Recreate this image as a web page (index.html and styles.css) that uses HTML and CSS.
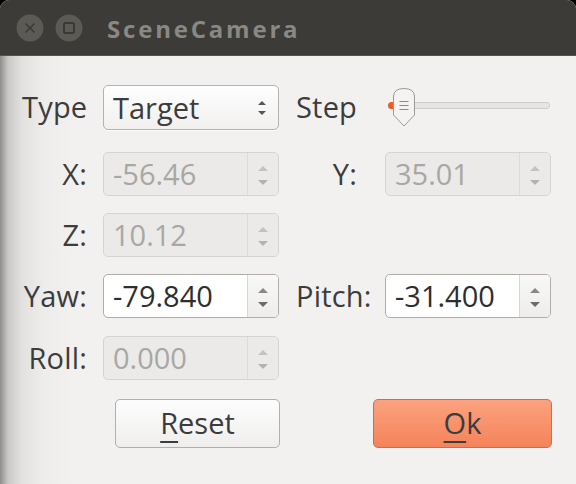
FILE: index.html
```html
<!DOCTYPE html>
<html>
<head>
<meta charset="utf-8">
<link rel="stylesheet" href="styles.css">
</head>
<body>
<div class="window">
  <div class="titlebar">
    <div class="wbtns">
      <span class="wbtn"><svg width="28" height="28" viewBox="0 0 28 28"><circle cx="14" cy="14" r="13.5" fill="#5b5a55"/><path d="M10 10 L18 18 M18 10 L10 18" stroke="#3a3935" stroke-width="1.6" stroke-linecap="round"/></svg></span>
      <span class="wbtn"><svg width="28" height="28" viewBox="0 0 28 28"><circle cx="14" cy="14" r="13.5" fill="#5b5a55"/><rect x="9" y="9" width="10" height="10" rx="1.5" fill="none" stroke="#3a3935" stroke-width="2"/></svg></span>
    </div>
    <div class="title">SceneCamera</div>
  </div>
  <div class="content">
    <div class="form">
      <div class="lbl">Type</div>
      <div class="combo"><span>Target</span>
        <svg class="carr" width="12" height="20" viewBox="0 0 12 20"><path d="M2 7 L6 3 L10 7 Z M2 13 L10 13 L6 17 Z" fill="#555"/></svg>
      </div>
      <div class="lbl2">Step</div>
      <div class="slider">
        <div class="track"><div class="fill"></div></div>
        <svg class="handle" width="28" height="42" viewBox="0 0 28 42"><path d="M3.5 10 Q3.5 1.5 14 1.5 Q24.5 1.5 24.5 10 L24.5 28 L14 39 L3.5 28 Z" fill="#f4f3f1" stroke="#9d9a95" stroke-width="1"/><path d="M9.5 14.5 H18.5 M9.5 18.5 H18.5 M9.5 22.5 H18.5" stroke="#8e8b86" stroke-width="1"/></svg>
      </div>

      <div class="lbl">X:</div>
      <div class="spin dis"><span class="val">-56.46</span><span class="arr"><i class="up"></i><i class="dn"></i></span></div>
      <div class="lbl2 right">Y:</div>
      <div class="spin dis"><span class="val">35.01</span><span class="arr"><i class="up"></i><i class="dn"></i></span></div>

      <div class="lbl">Z:</div>
      <div class="spin dis"><span class="val">10.12</span><span class="arr"><i class="up"></i><i class="dn"></i></span></div>
      <div></div><div></div>

      <div class="lbl">Yaw:</div>
      <div class="spin"><span class="val">-79.840</span><span class="arr"><i class="up"></i><i class="dn"></i></span></div>
      <div class="lbl2">Pitch:</div>
      <div class="spin"><span class="val">-31.400</span><span class="arr"><i class="up"></i><i class="dn"></i></span></div>

      <div class="lbl">Roll:</div>
      <div class="spin dis"><span class="val">0.000</span><span class="arr"><i class="up"></i><i class="dn"></i></span></div>
      <div></div><div></div>
    </div>
    <div class="buttons">
      <button class="btn reset"><u>R</u>eset</button>
      <button class="btn ok"><u>O</u>k</button>
    </div>
  </div>
</div>
</body>
</html>
```

FILE: styles.css
```css
html, body {
  margin: 0;
  padding: 0;
  background: #000;
}
body {
  width: 576px;
  height: 484px;
  overflow: hidden;
  font-family: "Open Sans", "DejaVu Sans", sans-serif;
  color: #3c3c3c;
}
.window {
  width: 576px;
  height: 484px;
  border-radius: 9px 9px 0 0;
  overflow: hidden;
  background: #f2f1f0;
}
.titlebar {
  height: 55px;
  background: #3c3b37;
  border-bottom: 1px solid #55544f;
  display: flex;
  align-items: center;
}
.wbtns {
  display: flex;
  gap: 11px;
  margin-left: 16px;
  margin-top: 1px;
}
.wbtn { display: block; width: 28px; height: 28px; }
.wbtn svg { display: block; }
.title {
  margin-left: 24px;
  font-family: "Open Sans", sans-serif;
  font-weight: 700;
  font-size: 24px;
  color: #8a8882;
  letter-spacing: 2.8px;
  margin-top: 1px;
}
.content {
  height: 428px;
  padding: 29px 0 0 22px;
  box-sizing: border-box;
  background:
    linear-gradient(to right, #8e8d8b 0px, #c9c8c6 8px, #e3e2e0 22px, #eeedec 45px, #f2f1f0 80px);
}
.form {
  display: grid;
  grid-template-columns: 81px 193px 89px 166px;
  grid-template-rows: 50px 44px 44px 45px 44px;
  row-gap: 17px;
  align-items: start;
}
.lbl {
  font-size: 29px;
  text-align: right;
  padding-right: 16px;
  height: 44px;
  line-height: 44px;
  letter-spacing: 0.2px;
}
.lbl2 {
  font-size: 29px;
  height: 44px;
  line-height: 44px;
  letter-spacing: 0.2px;
  white-space: nowrap;
}
.lbl2.right { text-align: right; padding-right: 28px; }
.combo {
  width: 176px;
  height: 45px;
  box-sizing: border-box;
  border: 1px solid #b5b2ad;
  border-radius: 5px;
  background: linear-gradient(#fefefe, #f1f0ef);
  display: flex;
  align-items: center;
  justify-content: space-between;
  padding: 0 10px 0 9px;
  font-size: 29px;
  box-shadow: 0 1px 0 rgba(255,255,255,0.7);
}
.combo span { margin-top: -1px; }
.slider {
  position: relative;
  height: 44px;
  width: 166px;
}
.track {
  position: absolute;
  left: 6px;
  right: 1px;
  top: 17px;
  height: 5px;
  border-radius: 3px;
  background: #e6e5e3;
  border: 1px solid #cfcdc9;
}
.fill {
  position: absolute;
  left: -4px;
  top: -1px;
  width: 9px;
  height: 7px;
  border-radius: 4px;
  background: #ef5a26;
}
.handle {
  position: absolute;
  left: 5px;
  top: 2px;
}
.spin {
  width: 176px;
  height: 44px;
  box-sizing: border-box;
  border: 1px solid #b0ada8;
  border-radius: 5px;
  background: #fff;
  display: flex;
  overflow: hidden;
}
.form > .spin:nth-child(4n) { width: 166px; }
.spin .val {
  flex: 1;
  font-size: 29px;
  line-height: 42px;
  padding-left: 9px;
  color: #2e2e2e;
  white-space: nowrap;
}
.spin .arr {
  width: 30px;
  flex: none;
  border-left: 1px solid #d8d6d2;
  background: linear-gradient(#f8f8f7, #eeedec);
  position: relative;
}
.spin i {
  position: absolute;
  left: 10px;
  width: 0;
  height: 0;
  border-left: 5px solid transparent;
  border-right: 5px solid transparent;
}
.spin i.up { top: 13px; border-bottom: 5px solid #8a8884; }
.spin i.dn { top: 27px; border-top: 5px solid #6d6b67; }
.spin.dis {
  background: #ebeae8;
  border-color: #d6d4d0;
}
.spin.dis .val { color: #a9a7a3; }
.spin.dis .arr { background: #ebeae8; border-left-color: #dddbd7; }
.spin.dis i.up { border-bottom-color: #c4c2be; }
.spin.dis i.dn { border-top-color: #b5b3af; }

.buttons {
  display: flex;
  margin-top: 19px;
  padding-left: 93px;
}
.btn {
  height: 49px;
  border-radius: 5px;
  font-family: "Open Sans", sans-serif;
  font-size: 29px;
  color: #3c3c3c;
  padding: 0;
  padding-bottom: 2px;
}
.btn u {
  text-decoration: underline;
  text-underline-offset: 7px;
  text-decoration-thickness: 2px;
}
.reset {
  width: 165px;
  border: 1px solid #b2afaa;
  background: linear-gradient(#fdfdfd, #efeeed);
}
.ok {
  width: 179px;
  margin-left: 93px;
  border: 1px solid #c7704f;
  background: linear-gradient(#fba27f, #f5835a);
}
```
